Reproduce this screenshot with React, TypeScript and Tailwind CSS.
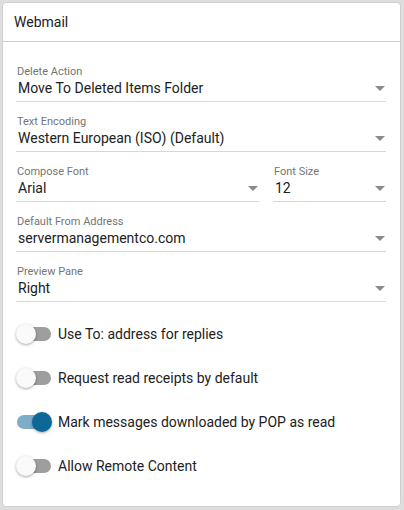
import React from "react";

function Arrow() {
  return (
    <svg width="10" height="5" viewBox="0 0 10 5" className="shrink-0">
      <path d="M0 0 L10 0 L5 5 Z" fill="#8a8a8a" />
    </svg>
  );
}

function Field({ label, value, className = "" }: { label: string; value: string; className?: string }) {
  return (
    <div className={"flex flex-col " + className}>
      <div className="text-[11px] leading-[13px] text-[#757575] pl-[1px]">{label}</div>
      <div className="flex items-center justify-between h-[20px] pl-[2px] pr-[1px] text-[14px] text-[#212121] leading-[20px]">
        <span>{value}</span>
        <Arrow />
      </div>
      <div className="h-[3px]" />
      <div className="h-px bg-[#d6d6d6]" />
    </div>
  );
}

function Toggle({ on, label }: { on?: boolean; label: string }) {
  return (
    <div className="flex items-center h-[24px]">
      <div className="relative w-[42px] h-[24px] shrink-0">
        <div
          className={
            "absolute left-[1px] top-[5px] w-[34px] h-[14px] rounded-full " +
            (on ? "bg-[#7eadca]" : "bg-[#9e9e9e]")
          }
        />
        <div
          className={
            "absolute top-[2px] w-[20px] h-[20px] rounded-full shadow-[0_1px_3px_rgba(0,0,0,0.35)] " +
            (on ? "left-[16px] bg-[#0b6897]" : "left-0 bg-[#fafafa]")
          }
        />
      </div>
      <span className="text-[14px] text-[#212121]">{label}</span>
    </div>
  );
}

export default function App() {
  return (
    <div
      className="w-[404px] h-[510px] bg-[#dedede] p-[2px] pr-[3px] pb-[3px]"
      style={{ fontFamily: "Roboto, 'Liberation Sans', sans-serif" }}
    >
      <div className="w-full h-full bg-white rounded-[4px] border border-[#cfcfcf] flex flex-col">
        <div className="h-[39px] border-b border-[#d0d0d0] flex items-center pl-[11px] text-[14px] text-[#212121]">
          Webmail
        </div>
        <div className="flex flex-col pl-[13px] pr-[14px] pt-[23px]">
          <div className="flex flex-col gap-[13px]">
            <Field label="Delete Action" value="Move To Deleted Items Folder" />
            <Field label="Text Encoding" value="Western European (ISO) (Default)" />
            <div className="flex gap-[14px]">
              <Field label="Compose Font" value="Arial" className="w-[243px]" />
              <Field label="Font Size" value="12" className="flex-1" />
            </div>
            <Field label="Default From Address" value="servermanagementco.com" />
            <Field label="Preview Pane" value="Right" />
          </div>
          <div className="flex flex-col gap-[20px] mt-[20px]">
            <Toggle label="Use To: address for replies" />
            <Toggle label="Request read receipts by default" />
            <Toggle on label="Mark messages downloaded by POP as read" />
            <Toggle label="Allow Remote Content" />
          </div>
        </div>
      </div>
    </div>
  );
}
